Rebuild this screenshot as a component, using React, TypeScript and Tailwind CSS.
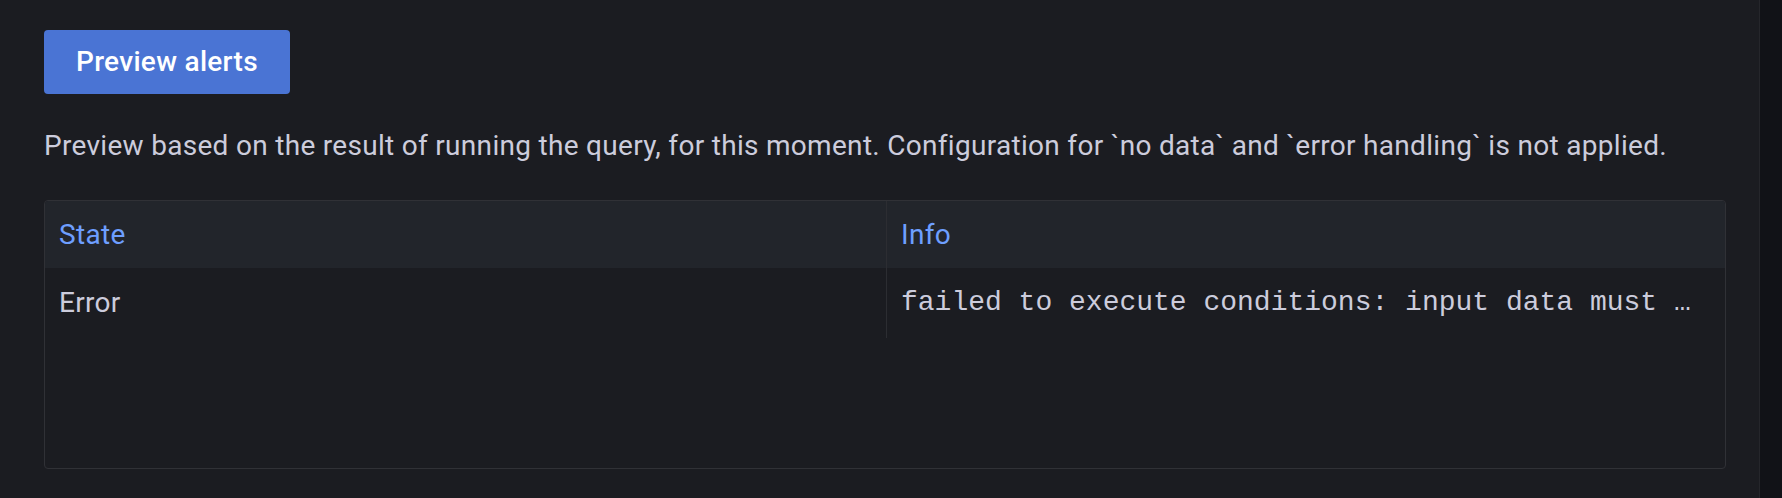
import React from "react";

const rows = [
  {
    state: "Error",
    info: "failed to execute conditions: input data must …",
  },
];

export default function App() {
  return (
    <div className="flex h-[498px] w-full bg-[#111217] font-['Roboto',sans-serif] tracking-[0.3px]">
      <div className="w-[1760px] shrink-0 border-r border-[#25262b] bg-[#1b1c21] pl-[44px] pt-[30px]">
        <button className="h-[64px] rounded-[4px] bg-[#4a74d4] px-[32px] text-[28px] font-medium text-white">
          Preview alerts
        </button>

        <p className="mt-[31px] text-[28px] leading-[42px] text-[#ccccdc]">
          Preview based on the result of running the query, for this moment. Configuration for `no data` and `error handling` is not applied.
        </p>

        <div className="mt-[33px] h-[269px] w-[1682px] overflow-hidden rounded-[4px] border border-[#303136]">
          <div className="flex h-[67px] bg-[#22252b] text-[28px] text-[#6e9fff]">
            <div className="flex w-[841px] items-center px-[14px]">State</div>
            <div className="flex flex-1 items-center border-l border-[#2c2d32] px-[14px]">Info</div>
          </div>
          {rows.map((r) => (
            <div key={r.state} className="flex h-[70px] text-[#ccccdc]">
              <div className="flex w-[841px] items-center px-[14px] text-[28px]">{r.state}</div>
              <div className="flex min-w-0 flex-1 items-center border-l border-[#2c2d32] px-[14px]">
                <span className="truncate whitespace-pre font-['Liberation_Mono',monospace] text-[28px] tracking-normal">
                  {r.info}
                </span>
              </div>
            </div>
          ))}
        </div>
      </div>
      <div className="flex-1" />
    </div>
  );
}
